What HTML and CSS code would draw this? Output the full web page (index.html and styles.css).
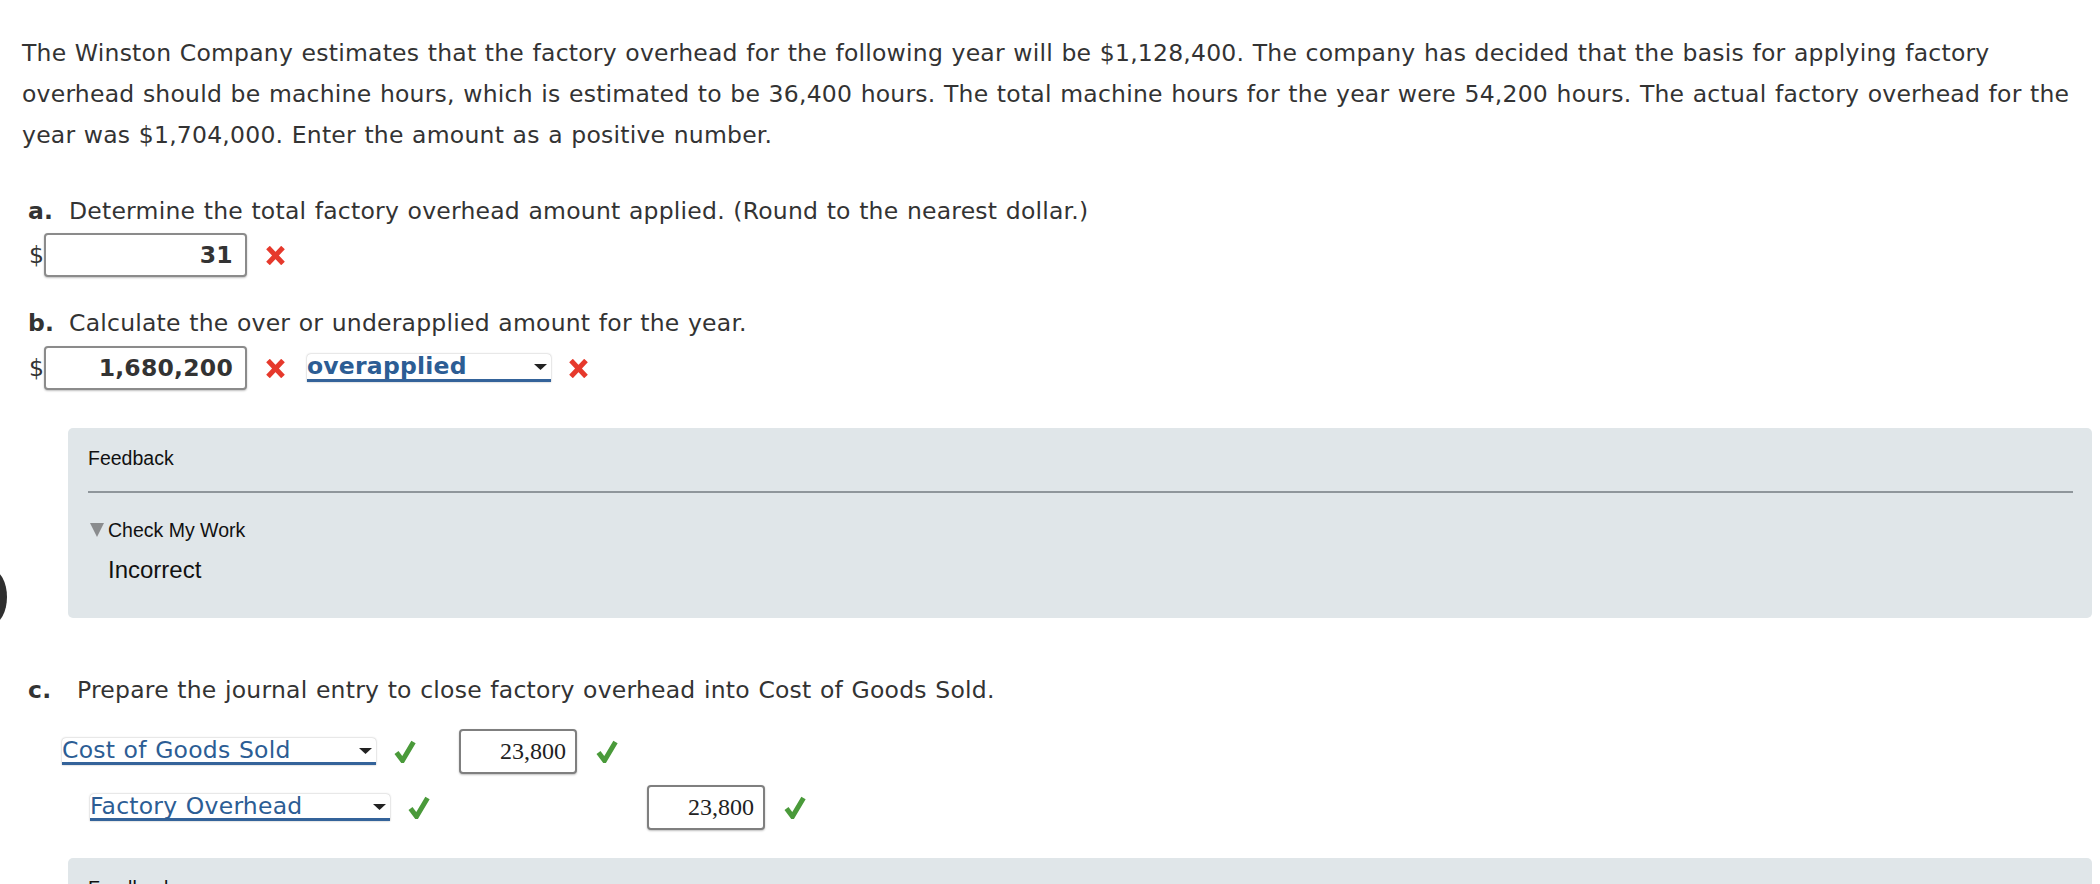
FILE: index.html
```html
<!DOCTYPE html>
<html lang="en">
<head>
<meta charset="utf-8">
<title>Factory Overhead</title>
<link rel="stylesheet" href="styles.css">
</head>
<body>
<div class="edge-dot"></div>
<main class="page">
  <p class="intro">The Winston Company estimates that the factory overhead for the following year will be $1,128,400. The company has decided that the basis for applying factory<br>overhead should be machine hours, which is estimated to be 36,400 hours. The total machine hours for the year were 54,200 hours. The actual factory overhead for the<br>year was $1,704,000. Enter the amount as a positive number.</p>

  <section class="part part-a">
    <div class="prompt"><span class="label">a.</span>Determine the total factory overhead amount applied. (Round to the nearest dollar.)</div>
    <div class="answer">
      <span class="dollar">$</span>
      <span class="num-box">31</span>
      <svg class="mark-x" viewBox="0 0 21 19" width="21" height="19"><path d="M3 1.5 L18 17.5 M18 1.5 L3 17.5"/></svg>
    </div>
  </section>

  <section class="part part-b">
    <div class="prompt"><span class="label">b.</span>Calculate the over or underapplied amount for the year.</div>
    <div class="answer">
      <span class="dollar">$</span>
      <span class="num-box">1,680,200</span>
      <svg class="mark-x" viewBox="0 0 21 19" width="21" height="19"><path d="M3 1.5 L18 17.5 M18 1.5 L3 17.5"/></svg>
      <span class="select select-bold">overapplied<svg class="caret" viewBox="0 0 13 6" width="13" height="6"><path d="M0 0 H13 L6.5 6 Z"/></svg></span>
      <svg class="mark-x mark-x-2" viewBox="0 0 21 19" width="21" height="19"><path d="M3 1.5 L18 17.5 M18 1.5 L3 17.5"/></svg>
    </div>
  </section>

  <div class="feedback">
    <div class="fb-title">Feedback</div>
    <div class="fb-rule"></div>
    <div class="fb-toggle"><svg class="fb-tri" viewBox="0 0 14 14" width="14" height="14"><path d="M0 0 H14 L7 14 Z"/></svg>Check My Work</div>
    <div class="fb-result">Incorrect</div>
  </div>

  <section class="part part-c">
    <div class="prompt"><span class="label label-c">c.</span>Prepare the journal entry to close factory overhead into Cost of Goods Sold.</div>
    <div class="journal">
      <div class="j-cell j-acct">
        <span class="select select-acct1">Cost of Goods Sold<svg class="caret" viewBox="0 0 13 6" width="13" height="6"><path d="M0 0 H13 L6.5 6 Z"/></svg></span>
        <svg class="mark-ok" viewBox="0 0 22 23" width="22" height="23"><path d="M2.5 12.5 L8.5 20.5 L19.5 2"/></svg>
      </div>
      <div class="j-cell j-debit">
        <span class="amt-box">23,800</span>
        <svg class="mark-ok" viewBox="0 0 22 23" width="22" height="23"><path d="M2.5 12.5 L8.5 20.5 L19.5 2"/></svg>
      </div>
      <div class="j-cell j-credit"></div>

      <div class="j-cell j-acct j-indent">
        <span class="select select-acct2">Factory Overhead<svg class="caret" viewBox="0 0 13 6" width="13" height="6"><path d="M0 0 H13 L6.5 6 Z"/></svg></span>
        <svg class="mark-ok" viewBox="0 0 22 23" width="22" height="23"><path d="M2.5 12.5 L8.5 20.5 L19.5 2"/></svg>
      </div>
      <div class="j-cell j-debit"></div>
      <div class="j-cell j-credit">
        <span class="amt-box">23,800</span>
        <svg class="mark-ok" viewBox="0 0 22 23" width="22" height="23"><path d="M2.5 12.5 L8.5 20.5 L19.5 2"/></svg>
      </div>
    </div>
  </section>

  <div class="feedback feedback-2">
    <div class="fb-title">Feedback</div>
    <div class="fb-rule"></div>
    <div class="fb-toggle"><svg class="fb-tri" viewBox="0 0 14 14" width="14" height="14"><path d="M0 0 H14 L7 14 Z"/></svg>Check My Work</div>
    <div class="fb-result">Correct</div>
  </div>
</main>
</body>
</html>
```

FILE: styles.css
```css
html, body {
  margin: 0;
  padding: 0;
  background: #ffffff;
}

body {
  font-family: "DejaVu Sans", Verdana, sans-serif;
  font-size: 23.5px;
  letter-spacing: 0.22px;
  color: #333333;
  overflow: hidden;
}

.page {
  padding: 33px 8px 0 22px;
}

.intro {
  margin: 0;
  line-height: 41px;
  word-spacing: 0.8px;
}

.part-a {
  margin-top: 35px;
}

.part-b {
  margin-top: 26px;
}

.part-c {
  margin-top: 52px;
}

.prompt {
  line-height: 41px;
  padding-left: 6px;
  word-spacing: 0.8px;
  white-space: nowrap;
}

.label {
  display: inline-block;
  width: 41px;
  font-weight: bold;
}

.label-c {
  width: 49px;
}

.answer {
  display: flex;
  align-items: center;
  padding-left: 7px;
  margin-top: 1px;
}

.part-b .answer {
  margin-top: 2px;
}

.dollar {
  line-height: 44px;
  letter-spacing: 0;
}

.num-box {
  box-sizing: border-box;
  width: 203px;
  height: 44px;
  border: 2px solid #8b8b8b;
  border-radius: 4px;
  box-shadow: 0 1px 2px rgba(0, 0, 0, 0.25);
  padding-right: 12px;
  text-align: right;
  font-weight: bold;
  line-height: 40px;
  color: #333333;
  background: #ffffff;
}

.mark-x {
  flex: none;
  margin-left: 18px;
}

.mark-x path {
  fill: none;
  stroke: #e6392c;
  stroke-width: 5;
}

.mark-x-2 {
  margin-left: 17px;
}

.select {
  box-sizing: border-box;
  display: inline-flex;
  align-items: flex-start;
  justify-content: space-between;
  height: 27.5px;
  line-height: 24px;
  background: #ffffff;
  border-radius: 4px 4px 0 0;
  border-bottom: 3px solid #34639a;
  box-shadow: 0 0 2px rgba(0, 0, 0, 0.35);
  color: #2c5d94;
  padding-right: 4px;
  white-space: nowrap;
}

.select-bold {
  width: 244px;
  margin-left: 21px;
  font-weight: bold;
}

.caret {
  flex: none;
  margin-top: 10px;
}

.caret path {
  fill: #222222;
}

.feedback {
  margin: 38px 0 0 46px;
  padding: 18.5px 19px 34px 20px;
  background: #e0e6e9;
  border-radius: 5px;
  font-family: "Liberation Sans", Arial, sans-serif;
  letter-spacing: 0;
  color: #111111;
}

.fb-title {
  font-size: 19.5px;
  line-height: 22px;
}

.fb-rule {
  height: 2px;
  margin-top: 22.5px;
  background: #8f969b;
}

.fb-toggle {
  display: flex;
  align-items: center;
  margin-top: 26px;
  font-size: 19.5px;
  line-height: 22px;
}

.fb-tri {
  flex: none;
  margin: 0 4px 0 2px;
}

.fb-tri path {
  fill: #8a8c8e;
}

.fb-result {
  margin-top: 15px;
  padding-left: 20px;
  font-size: 24px;
  line-height: 28px;
}

.journal {
  display: grid;
  grid-template-columns: 397px 188px auto;
  grid-auto-rows: 45px;
  row-gap: 11px;
  margin: 18px 0 0 40px;
}

.j-cell {
  display: flex;
  align-items: center;
}

.j-indent {
  padding-left: 28px;
}

.select-acct1 {
  width: 314px;
  font-weight: normal;
  word-spacing: 0.8px;
}

.select-acct2 {
  width: 300px;
  font-weight: normal;
  word-spacing: 0.8px;
}

.mark-ok {
  flex: none;
  margin-left: 18px;
}

.mark-ok path {
  fill: none;
  stroke: #4a9a3a;
  stroke-width: 5;
  stroke-linejoin: miter;
}

.amt-box {
  box-sizing: border-box;
  width: 118px;
  height: 45px;
  border: 2px solid #7f7f7f;
  border-radius: 4px;
  box-shadow: 0 1px 2px rgba(0, 0, 0, 0.25);
  padding-right: 9px;
  text-align: right;
  font-family: "Liberation Serif", "Times New Roman", serif;
  font-size: 24px;
  letter-spacing: 0;
  line-height: 41px;
  color: #222222;
  background: #ffffff;
}

.j-debit .mark-ok,
.j-credit .mark-ok {
  margin-left: 19px;
}

.feedback-2 {
  margin-top: 28px;
}

.edge-dot {
  position: absolute;
  left: -23px;
  top: 570px;
  width: 30px;
  height: 54px;
  border-radius: 50%;
  background: #2f2f2f;
}
```
